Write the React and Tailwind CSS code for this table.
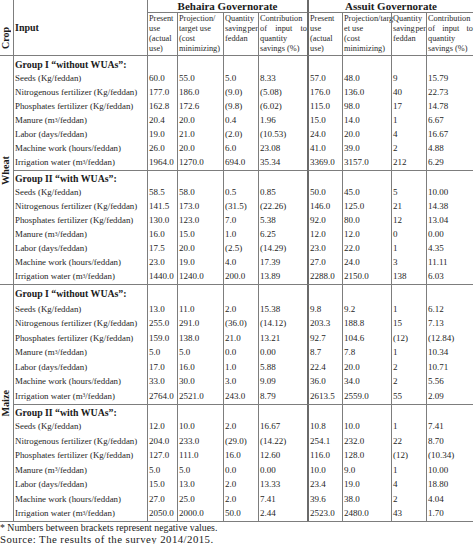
import React from "react";

const groups = [
  {
    crop: "Wheat",
    parts: [
      {
        title: "Group I \u201cwithout WUAs\u201d:",
        h: "h-[17px]",
        rh: "h-[14px]",
        rows: [
          ["60.0", "55.0", "5.0", "8.33", "57.0", "48.0", "9", "15.79"],
          ["177.0", "186.0", "(9.0)", "(5.08)", "176.0", "136.0", "40", "22.73"],
          ["162.8", "172.6", "(9.8)", "(6.02)", "115.0", "98.0", "17", "14.78"],
          ["20.4", "20.0", "0.4", "1.96", "15.0", "14.0", "1", "6.67"],
          ["19.0", "21.0", "(2.0)", "(10.53)", "24.0", "20.0", "4", "16.67"],
          ["26.0", "20.0", "6.0", "23.08", "41.0", "39.0", "2", "4.88"],
          ["1964.0", "1270.0", "694.0", "35.34", "3369.0", "3157.0", "212", "6.29"],
        ],
      },
      {
        title: "Group II \u201cwith WUAs\u201d:",
        h: "h-[16px]",
        rh: "h-[14px]",
        rows: [
          ["58.5", "58.0", "0.5", "0.85", "50.0", "45.0", "5", "10.00"],
          ["141.5", "173.0", "(31.5)", "(22.26)", "146.0", "125.0", "21", "14.38"],
          ["130.0", "123.0", "7.0", "5.38", "92.0", "80.0", "12", "13.04"],
          ["16.0", "15.0", "1.0", "6.25", "12.0", "12.0", "0", "0.00"],
          ["17.5", "20.0", "(2.5)", "(14.29)", "23.0", "22.0", "1", "4.35"],
          ["23.0", "19.0", "4.0", "17.39", "27.0", "24.0", "3", "11.11"],
          ["1440.0", "1240.0", "200.0", "13.89", "2288.0", "2150.0", "138", "6.03"],
        ],
      },
    ],
  },
  {
    crop: "Maize",
    parts: [
      {
        title: "Group I \u201cwithout WUAs\u201d:",
        h: "h-[18px]",
        rh: "h-[14.5px]",
        rows: [
          ["13.0", "11.0", "2.0", "15.38", "9.8", "9.2", "1", "6.12"],
          ["255.0", "291.0", "(36.0)", "(14.12)", "203.3", "188.8", "15", "7.13"],
          ["159.0", "138.0", "21.0", "13.21", "92.7", "104.6", "(12)", "(12.84)"],
          ["5.0", "5.0", "0.0", "0.00", "8.7", "7.8", "1", "10.34"],
          ["17.0", "16.0", "1.0", "5.88", "22.4", "20.0", "2", "10.71"],
          ["33.0", "30.0", "3.0", "9.09", "36.0", "34.0", "2", "5.56"],
          ["2764.0", "2521.0", "243.0", "8.79", "2613.5", "2559.0", "55", "2.09"],
        ],
      },
      {
        title: "Group II \u201cwith WUAs\u201d:",
        h: "h-[16px]",
        rh: "h-[14.5px]",
        rows: [
          ["12.0", "10.0", "2.0", "16.67", "10.8", "10.0", "1", "7.41"],
          ["204.0", "233.0", "(29.0)", "(14.22)", "254.1", "232.0", "22", "8.70"],
          ["127.0", "111.0", "16.0", "12.60", "116.0", "128.0", "(12)", "(10.34)"],
          ["5.0", "5.0", "0.0", "0.00", "10.0", "9.0", "1", "10.00"],
          ["15.0", "13.0", "2.0", "13.33", "23.4", "19.0", "4", "18.80"],
          ["27.0", "25.0", "2.0", "7.41", "39.6", "38.0", "2", "4.04"],
          ["2050.0", "2000.0", "50.0", "2.44", "2523.0", "2480.0", "43", "1.70"],
        ],
      },
    ],
  },
];

const M3 = () => (
  <>
    m<sup className="text-[5.5px] relative -top-[1px]">3</sup>
  </>
);

const labels = [
  "Seeds (Kg/feddan)",
  "Nitrogenous fertilizer (Kg/feddan)",
  "Phosphates fertilizer (Kg/feddan)",
  <>Manure (<M3 />/feddan)</>,
  "Labor (days/feddan)",
  "Machine work (hours/feddan)",
  <>Irrigation water (<M3 />/feddan)</>,
];

const line = "border-[#7d7d7d]";

function SubHead({ lines, sep }) {
  return (
    <div
      className={`h-[42px] ${sep ? "border-l-[2px] border-[#6a6a6a]" : `border-l ${line}`} pl-[1px] pt-[1px] text-[8.3px] leading-[10px] text-[#2a2a2a]`}
    >
      {lines.map((l, i) =>
        Array.isArray(l) ? (
          <div key={i} className="flex justify-between whitespace-nowrap">
            {l.map((w, j) => (
              <span key={j}>{w}</span>
            ))}
          </div>
        ) : (
          <div key={i} className="whitespace-nowrap">
            {l}
          </div>
        )
      )}
    </div>
  );
}

export default function App() {
  const presentLines = ["Present", "use", "(actual", "use)"];
  const qtyLines = ["Quantity", ["saving", "per"], "feddan"];
  const contrLines = ["Contribution", ["of", "input", "to"], "quantity", "savings (%)"];

  return (
    <div
      className="w-[474px] h-[544px] overflow-hidden bg-white text-[#1a1a1a]"
      style={{ fontFamily: '"Liberation Serif", "Times New Roman", serif' }}
    >
      <div className="grid grid-cols-[12.5px_134.5px_30px_46px_35px_49px_35px_49px_35px_47px] w-[473px]">
        {/* Header */}
        <div className="row-span-2 flex items-end justify-center pb-[6px]">
          <span className="[writing-mode:vertical-rl] rotate-180 text-[10px] font-bold leading-none">
            Crop
          </span>
        </div>
        <div className={`row-span-2 border-l ${line} flex items-center pl-[1.5px] text-[10px] font-bold`}>
          Input
        </div>
        <div
          className={`col-span-4 h-[13px] border-l border-b ${line} flex items-center justify-center text-[11px] font-bold leading-none`}
        >
          Behaira Governorate
        </div>
        <div
          className={`col-span-4 h-[13px] border-l-[2px] border-b border-[#6a6a6a] border-b-[#7d7d7d] flex items-center justify-center text-[11px] font-bold leading-none`}
        >
          Assuit Governorate
        </div>
        <SubHead lines={presentLines} />
        <SubHead lines={["Projection/", "target use", "(cost", "minimizing)"]} />
        <SubHead lines={qtyLines} />
        <SubHead lines={contrLines} />
        <SubHead lines={presentLines} sep />
        <SubHead lines={["Projection/targ", "et use", "(cost", "minimizing)"]} />
        <SubHead lines={qtyLines} />
        <SubHead lines={contrLines} />

        {/* Body */}
        {groups.map((g, gi) => (
          <React.Fragment key={gi}>
            <div
              className={`col-start-1 [grid-row:span_16] border-t ${line} flex items-center justify-center`}
            >
              <span className="[writing-mode:vertical-rl] rotate-180 text-[10.2px] font-bold leading-none">
                {g.crop}
              </span>
            </div>
            {g.parts.map((p, pi) => (
              <React.Fragment key={pi}>
                <div
                  className={`${p.h} border-t border-l ${line} flex items-center pl-[1.5px] pt-[2px] text-[9.8px] font-bold whitespace-nowrap`}
                >
                  {p.title}
                </div>
                {Array.from({ length: 8 }).map((_, ci) => (
                  <div
                    key={ci}
                    className={`${p.h} border-t ${
                      ci === 4 ? "border-l-[2px] border-l-[#6a6a6a]" : "border-l border-l-[#7d7d7d]"
                    } border-t-[#7d7d7d]`}
                  />
                ))}
                {p.rows.map((r, ri) => (
                  <React.Fragment key={ri}>
                    <div
                      className={`${p.rh} border-l ${line} flex items-center pl-[1.5px] text-[8.9px] whitespace-nowrap text-[#262626]`}
                    >
                      {labels[ri]}
                    </div>
                    {r.map((v, ci) => (
                      <div
                        key={ci}
                        className={`${p.rh} ${
                          ci === 4 ? "border-l-[2px] border-[#6a6a6a]" : `border-l ${line}`
                        } flex items-center pl-[1px] text-[9px] whitespace-nowrap text-[#262626]`}
                      >
                        {v}
                      </div>
                    ))}
                  </React.Fragment>
                ))}
              </React.Fragment>
            ))}
          </React.Fragment>
        ))}
        <div className={`col-span-10 border-t ${line}`} />
      </div>
      <div className="text-[9.8px] leading-[12px] text-[#1a1a1a] whitespace-nowrap">
        * Numbers between brackets represent negative values.
      </div>
      <div className="text-[10.8px] leading-[11px] tracking-[0.45px] text-[#1a1a1a] whitespace-nowrap">
        Source: The results of the survey 2014/2015.
      </div>
    </div>
  );
}
